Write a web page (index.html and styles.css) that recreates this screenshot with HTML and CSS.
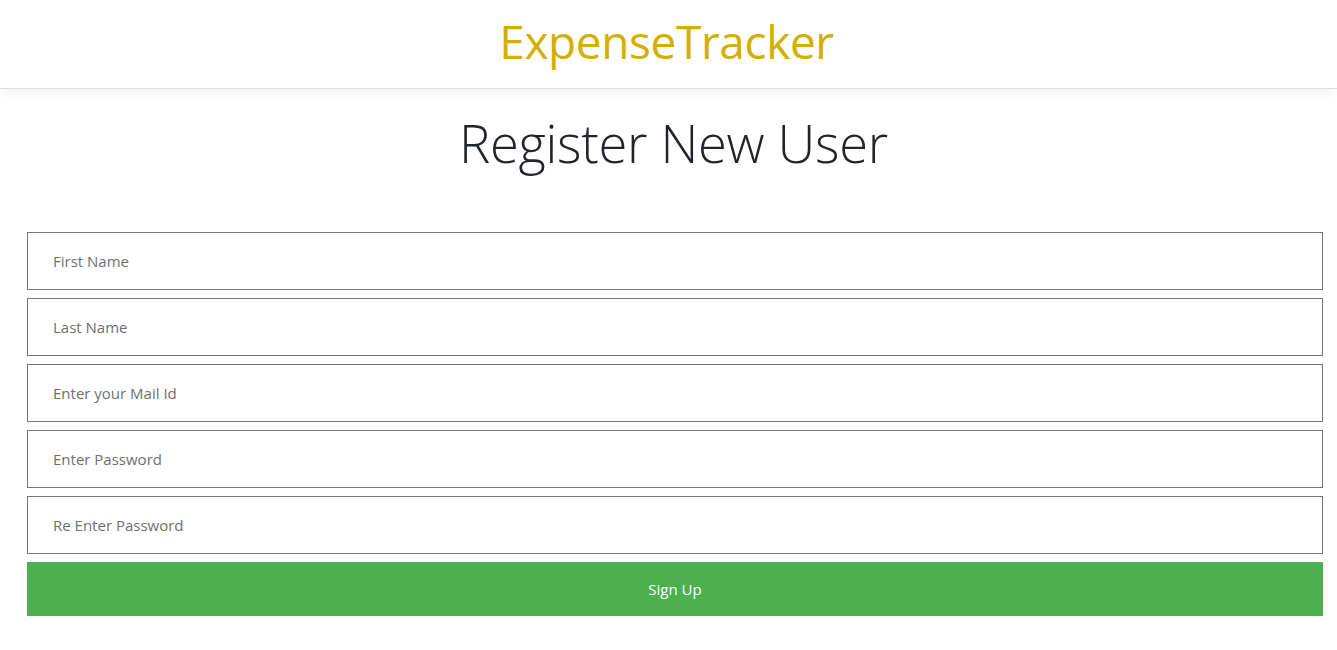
FILE: index.html
```html
<!DOCTYPE html>
<html>
<head>
<meta charset="utf-8">
<link rel="stylesheet" href="styles.css">
</head>
<body>
<header class="topbar">
  <h1 class="brand">ExpenseTracker</h1>
</header>
<main class="page">
  <h2 class="page-title">Register New User</h2>
  <form class="register-form">
    <input class="field" type="text" placeholder="First Name">
    <input class="field" type="text" placeholder="Last Name">
    <input class="field" type="email" placeholder="Enter your Mail Id">
    <input class="field" type="password" placeholder="Enter Password">
    <input class="field" type="password" placeholder="Re Enter Password">
    <button class="submit" type="button">Sign Up</button>
  </form>
</main>
</body>
</html>
```
FILE: styles.css
```css
* { box-sizing: border-box; }
html, body { margin: 0; padding: 0; background: #fff; }
body {
  font-family: "Open Sans", "Noto Sans", sans-serif;
  color: #212529;
}
.topbar {
  height: 89px;
  padding-bottom: 6px;
  border-bottom: 1px solid #dedede;
  box-shadow: 0 3px 10px rgba(0,0,0,0.06);
  display: flex;
  align-items: center;
  justify-content: center;
}
.brand {
  margin: 0;
  font-weight: 400;
  font-size: 46px;
  color: #d4ae00;
  line-height: 1;
  letter-spacing: -0.4px;
  padding-right: 4px;
}
.page-title {
  margin: 22px 0 0;
  text-align: center;
  font-weight: 300;
  font-size: 52.5px;
  line-height: 63px;
  color: #212529;
  padding-left: 10px;
  letter-spacing: -0.3px;
}
.register-form {
  margin-top: 58px;
  padding: 0 14px 0 27px;
  display: flex;
  flex-direction: column;
  gap: 8px;
}
.field {
  height: 58px;
  border: 1px solid #767676;
  border-radius: 0;
  padding: 0 25px;
  font-family: inherit;
  font-size: 15px;
  color: #333;
  outline: none;
}
.field::placeholder { color: #6f6f6f; }
.submit {
  height: 54px;
  border: none;
  background: #4caf50;
  color: #fff;
  font-family: inherit;
  font-size: 15px;
}
```
